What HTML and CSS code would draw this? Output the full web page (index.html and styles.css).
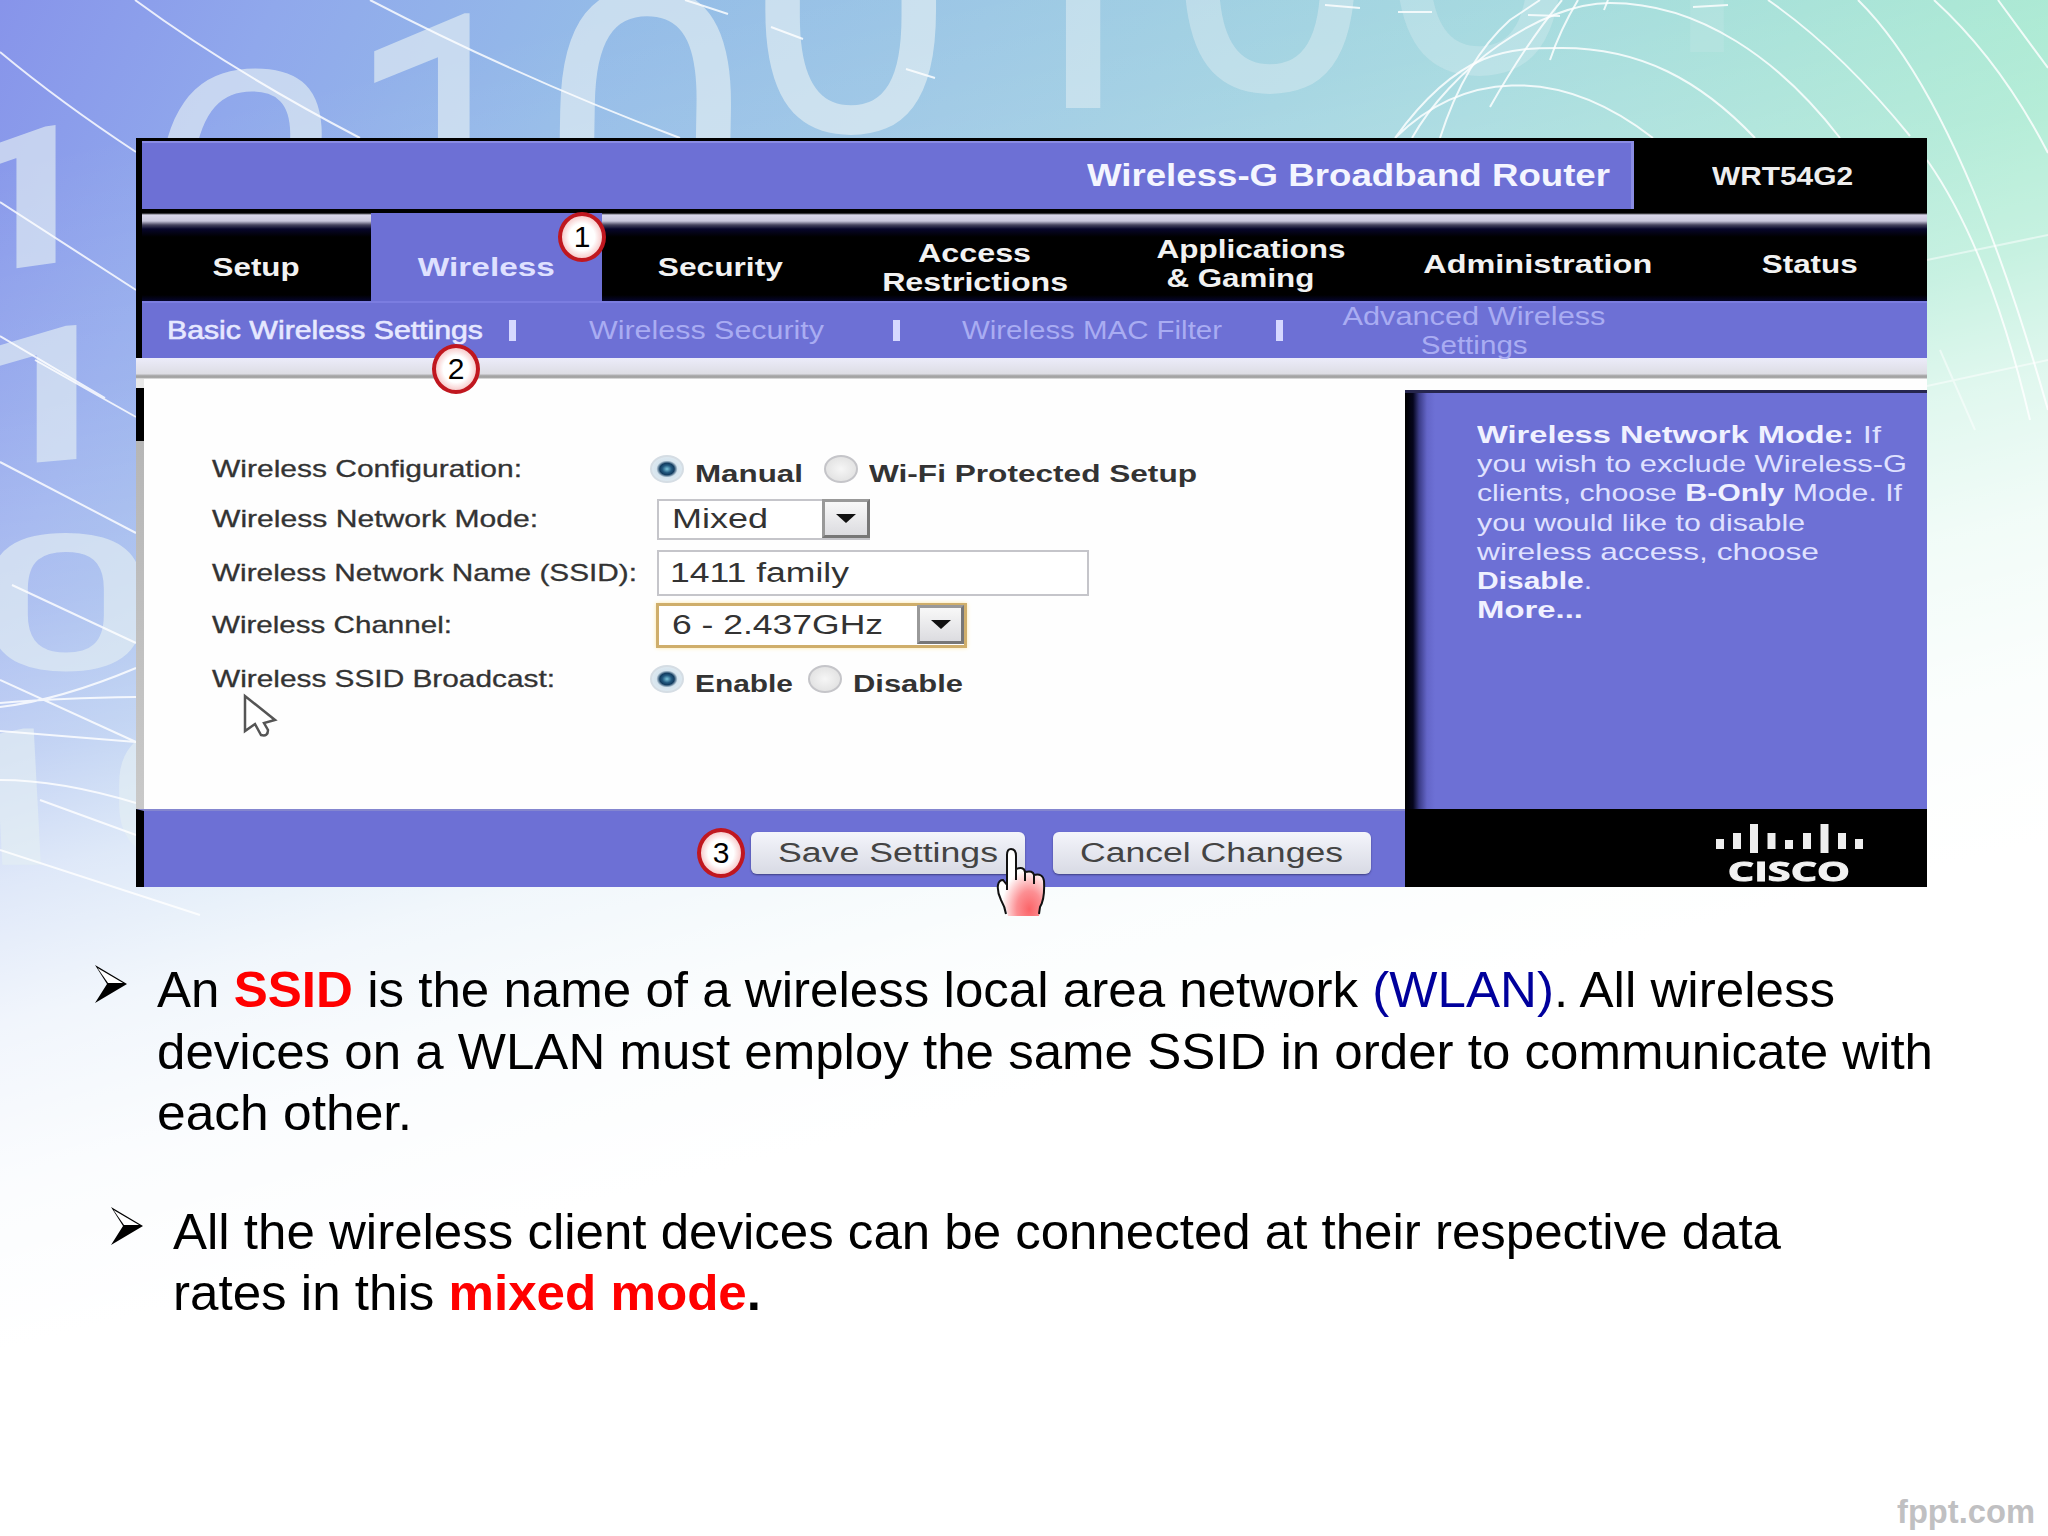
FILE: index.html
```html
<!DOCTYPE html>
<html lang="en">
<head>
  <meta charset="UTF-8">
  <title>Wireless Settings</title>
  <link rel="stylesheet" href="styles.css">
</head>
<body>
  <div class="slide">
    <svg class="backdrop" width="2048" height="1536" viewBox="0 0 2048 1536">
      <!-- binary digits -->
      <g class="digits">
        <text transform="translate(122 292) skewX(-9) scale(3.5 3.1)">0</text>
        <text transform="translate(345 292) scale(3.5 3.9)">1</text>
        <text transform="translate(536 275) skewX(-1) scale(3.8 4)">0</text>
        <text transform="translate(744 131) scale(3.8 4)">0</text>
        <text transform="translate(965 108) scale(3.8 4)" opacity=".8">1</text>
        <text transform="translate(1163 90) scale(3.8 4)" opacity=".65">0</text>
        <text transform="translate(1375 72) scale(3.7 4)" opacity=".45">0</text>
        <text transform="translate(1592 52) scale(3.7 4)" opacity=".25">1</text>
        <text class="heavy" transform="translate(-65 277) skewY(-8) scale(3.25 1.85)">1</text>
        <text class="heavy" transform="translate(-46 467) skewY(-5) scale(3.3 1.8)">1</text>
        <text class="heavy" transform="translate(-24 667) scale(3.2 1.82)">0</text>
        <text class="heavy" transform="translate(-78 862) skewX(3) scale(3.2 1.83)">1</text>
        <text class="heavy" transform="translate(106 860) scale(3.2 1.84)">0</text>
      </g>
      <!-- thin curves -->
      <g class="curves">
        <path d="M0 52Q60 102 136 152M135 0Q230 70 360 138M370 0Q520 78 680 138"/>
        <path d="M0 202L136 290M0 336L105 398M35 360L136 417M0 462L136 533M12 585L136 643"/>
        <path d="M685 0Q710 8 728 14M771 27L803 39M906 69L935 78M1325 5L1360 8M1398 12H1432M1528 15L1560 16M1693 7L1728 5"/>
        <path d="M0 707Q60 700 136 668M0 703Q60 698 136 697M0 680L136 742M0 731L136 742M0 780Q60 780 136 803M40 800L136 835M0 850L200 915"/>
        <path d="M1395 138C1460 74 1555 62 1653 138M1395 138C1460 48 1510 48 1562 48C1640 48 1700 80 1755 138"/>
        <path d="M1412 138C1450 70 1540 3 1610 3C1700 3 1780 60 1840 138M1768 0Q1840 50 1910 136"/>
        <path d="M1440 138Q1465 60 1510 20L1540 0M1490 107Q1525 45 1562 0M1550 60Q1560 30 1578 0M1604 10L1608 0"/>
        <path d="M1858 0Q1960 100 2048 410M1934 0Q2000 60 2048 153M1998 0L2048 68M1927 160Q1990 250 2030 420"/>
      </g>
      <path class="faint" d="M1927 260L2048 235M1927 386L2048 360M1940 350L1975 430"/>
    </svg>

    <div class="router">
      <div class="top">
        <div class="product"><span data-w="523">Wireless-G Broadband Router</span></div>
        <div class="model"><span data-w="141">WRT54G2</span></div>
      </div>

      <div class="tabs">
        <div class="tab setup"><span data-w="87">Setup</span></div>
        <div class="tab active"><span data-w="137">Wireless</span></div>
        <div class="tab security"><span data-w="125">Security</span></div>
        <div class="tab access"><span data-w="113">Access</span><span data-w="186">Restrictions</span></div>
        <div class="tab apps"><span data-w="189">Applications</span><span class="second" data-w="148">&amp; Gaming</span></div>
        <div class="tab admin"><span data-w="229">Administration</span></div>
        <div class="tab status"><span data-w="96">Status</span></div>
      </div>

      <div class="subnav">
        <span class="current" data-w="316">Basic Wireless Settings</span>
        <i class="bar bar1"></i>
        <div class="sub wsec"><span data-w="235">Wireless Security</span></div>
        <i class="bar bar2"></i>
        <div class="sub mac"><span data-w="260">Wireless MAC Filter</span></div>
        <i class="bar bar3"></i>
        <div class="sub adv"><span data-w="263">Advanced Wireless</span><span data-w="107">Settings</span></div>
      </div>
      <div class="strip"></div>

      <div class="main">
        <div class="form">
          <div class="row r1">
            <div class="label"><span data-w="310">Wireless Configuration:</span></div>
            <i class="radio on"></i><b class="opt" data-w="108">Manual</b>
            <i class="radio gap1"></i><b class="opt" data-w="328">Wi-Fi Protected Setup</b>
          </div>
          <div class="row r2">
            <div class="label"><span data-w="326">Wireless Network Mode:</span></div>
            <div class="select mode"><span data-w="96">Mixed</span><i class="drop"></i></div>
          </div>
          <div class="row r3">
            <div class="label"><span data-w="425">Wireless Network Name (SSID):</span></div>
            <div class="input"><span data-w="179">1411 family</span></div>
          </div>
          <div class="row r4">
            <div class="label"><span data-w="240">Wireless Channel:</span></div>
            <div class="select channel"><span data-w="211">6 - 2.437GHz</span><i class="drop"></i></div>
          </div>
          <div class="row r5">
            <div class="label"><span data-w="343">Wireless SSID Broadcast:</span></div>
            <i class="radio on"></i><b class="opt" data-w="98">Enable</b>
            <i class="radio gap2"></i><b class="opt" data-w="110">Disable</b>
          </div>
        </div>
        <div class="help">
          <div><span data-w="404"><b>Wireless Network Mode:</b> If</span></div>
          <div><span data-w="430">you wish to exclude Wireless-G</span></div>
          <div><span data-w="425">clients, choose <b>B-Only</b> Mode. If</span></div>
          <div><span data-w="328">you would like to disable</span></div>
          <div><span data-w="342">wireless access, choose</span></div>
          <div><span data-w="115"><b>Disable</b>.</span></div>
          <div><span data-w="106"><b>More...</b></span></div>
        </div>
      </div>

      <div class="bottom">
        <div class="actions">
          <div class="btn save"><span data-w="220">Save Settings</span></div>
          <div class="btn cancel"><span data-w="263">Cancel Changes</span></div>
        </div>
        <div class="brand">
          <svg width="154" height="30" viewBox="0 0 154 30">
            <path d="M8 17v10M25 11v16M42 2v29M59.500 11v16M77 18v9M95 11v16M112.500 2v29M130 11v16M147 17v10" stroke="#eee" stroke-width="8"/>
          </svg>
          <span data-w="122">CISCO</span>
        </div>
      </div>

      <div class="badge b1">1</div>
      <div class="badge b2">2</div>
      <div class="badge b3">3</div>

      <svg class="pointer" width="40" height="46" viewBox="0 0 40 46">
        <path d="M4 3V38L14 31L20 42Q27 44 27 37L23 30L34 27Z" fill="#fff" stroke="#555" stroke-width="2.500"/>
      </svg>
      <svg class="hand" width="54" height="72" viewBox="0 0 54 72">
        <defs>
          <radialGradient id="skin" cx=".68" cy=".9" r=".6">
            <stop offset="0" stop-color="#fb6468"/>
            <stop offset=".45" stop-color="#fc8f93"/>
            <stop offset="1" stop-color="#fff"/>
          </radialGradient>
        </defs>
        <path d="M12 69Q10 60 5 53Q1 45 2 38Q3 33 7 33L11 38V8Q11 2 15 2Q20 2 20 9V22Q28 19 29 25Q37 23 38 28Q47 26 48 34Q49 52 44 60L43 69Z" fill="url(#skin)"/>
        <path d="M10 67Q9 60 5 53Q1 45 2 38Q3 33 7 33L11 38V43V8Q11 2 15 2Q20 2 20 9V33V22Q28 19 29 25V34V25Q37 23 38 28V37V28Q47 26 48 34Q49 52 44 60L43 67" fill="none" stroke="#111" stroke-width="2"/>
      </svg>
    </div>

    <div class="points">
      <div class="point">
        <svg class="arrow" width="34" height="40" viewBox="0 0 34 40"><path d="M1 1L33 20L1 39L13 20Z" fill="#000"/><path d="M3.500 4L29 19H14Z" fill="#fff"/></svg>
        <div>
          <p><span data-w="1678">An <b class="red">SSID</b> is the name of a wireless local area network <span class="blue">(WLAN)</span>. All wireless</span></p>
          <p><span data-w="1776">devices on a WLAN must employ the same SSID in order to communicate with</span></p>
          <p><span data-w="255">each other.</span></p>
        </div>
      </div>
      <div class="point last">
        <svg class="arrow" width="34" height="40" viewBox="0 0 34 40"><path d="M1 1L33 20L1 39L13 20Z" fill="#000"/><path d="M3.500 4L29 19H14Z" fill="#fff"/></svg>
        <div>
          <p><span data-w="1608">All the wireless client devices can be connected at their respective data</span></p>
          <p><span data-w="588">rates in this <b class="red">mixed mode</b><b>.</b></span></p>
        </div>
      </div>
    </div>
    <div class="credit"><span data-w="138">fppt.com</span></div>
  </div>
  <script src="fit.js"></script>
</body>
</html>
```
FILE: styles.css
```css
* { box-sizing: border-box; }
body { margin: 0; font-family: "Liberation Sans", Arial, sans-serif; background: #fff; }
p { margin: 0; }
[data-w] { display: inline-block; white-space: nowrap; transform-origin: 0 50%; }

.slide {
  position: relative;
  display: flex;
  flex-direction: column;
  width: 2048px;
  height: 1536px;
  overflow: hidden;
  padding-top: 138px;
  background:
    linear-gradient(166deg, rgba(255,255,255,0) 8%, rgba(255,255,255,.12) 20%, rgba(255,255,255,.28) 30%, rgba(255,255,255,.46) 37%, rgba(255,255,255,.7) 43%, rgba(255,255,255,.87) 50%, rgba(255,255,255,.96) 58%, #fff 66%),
    linear-gradient(115deg, #8794ea 0, #90a8ec 10%, #94bbe8 22%, #99c6e4 36%, #9cd6dc 55%, #98e6c8 76%);
}
.backdrop { position: absolute; left: 0; top: 0; }
.digits { font: 100px Roboto, sans-serif; fill: #e4eff3; opacity: .66; }
.heavy { stroke: #e4eff3; stroke-width: 3; }
.curves { fill: none; stroke: #fff; stroke-opacity: .82; stroke-width: 2; }
.faint { fill: none; stroke: #fff; stroke-opacity: .5; stroke-width: 2; }

/* router page */
.router {
  position: relative;
  flex: none;
  display: flex;
  flex-direction: column;
  width: 1791px;
  height: 749px;
  margin-left: 136px;
  background: #000;
}
.top { display: flex; height: 75px; padding: 3px 0 4px 6px; }
.product {
  width: 1492px;
  padding-right: 21px;
  border-top: 2px solid #8a8ce4;
  border-right: 3px solid #8a8ce4;
  background: #6d70d5;
  color: #f4f5ff;
  font-size: 31px;
  font-weight: bold;
  line-height: 65px;
  text-align: right;
}
.model { flex: 1; padding-left: 78px; color: #eee; font-size: 26px; font-weight: bold; line-height: 70px; }

.tabs { display: flex; height: 88px; padding-left: 6px; }
.tab {
  display: flex;
  flex-direction: column;
  align-items: center;
  justify-content: center;
  padding-top: 21px;
  background: linear-gradient(#000 0, #d9d7ea 2px, #c9c7dc 8px, #45435e 12px, #07062a 16px, #000 24px, #000 82px, #05052c 88px);
  color: #f2f2f2;
  font-size: 26px;
  font-weight: bold;
  line-height: 29px;
}
.setup { width: 229px; }
.active { width: 231px; background: #6d70d5; color: #dfe1ff; }
.security { width: 236px; }
.access { width: 274px; }
.apps { width: 268px; padding: 14px 0 0 10px; }
.second { position: relative; left: -11px; }
.admin { width: 316px; padding-top: 14px; }
.status { width: 231px; padding: 14px 4px 0 0; }

.subnav {
  display: flex;
  align-items: center;
  height: 57px;
  margin-left: 6px;
  padding-left: 25px;
  background: #6d70d5;
  border-top: 2px solid #7b7de0;
  color: #a9acf2;
  font-size: 25px;
  line-height: 29px;
}
.current { color: #e6e8ff; -webkit-text-stroke: .6px #e6e8ff; }
.bar { width: 7px; height: 21px; background: #d5d8ff; }
.bar1 { margin-left: 26px; }
.bar2 { margin-left: 69px; }
.bar3 { margin-left: 54px; }
.wsec { margin-left: 73px; }
.mac { margin-left: 62px; }
.adv { display: flex; flex-direction: column; align-items: center; margin-left: 84px; }
.strip { height: 21px; background: linear-gradient(#ececfa, #dddde4 75%, #a2a2a2 85%, #a8a8a8 95%, #fff); }

.main { display: flex; height: 430px; background: #fefefe; }
.form {
  width: 1269px;
  padding: 64px 0 0 68px;
  border-left: 8px solid;
  border-image: linear-gradient(#e8e8e8 9px, #000 9px, #000 62px, #b6b6b6 62px, #c9c9c9 100%) 0 0 0 8;
  color: #333;
}
.row { display: flex; align-items: center; }
.r1 { height: 52px; }
.r2 { height: 48px; }
.r3 { height: 60px; }
.r4 { height: 44px; }
.r5 { height: 64px; }
.label { width: 438px; font-size: 24px; line-height: 30px; -webkit-text-stroke: .3px #333; }
.radio { flex: none; width: 34px; height: 28px; border-radius: 50%; border: 2px solid #c5c5c9; background: radial-gradient(#f6f6f6, #dcdcdc); }
.radio.on { border-color: #d5dde4; background: radial-gradient(#7cc6dc 0, #22587f 22%, #123c60 34%, #d5e4ee 50%, #e8eef2 100%); }
.opt { margin: 10px 0 0 11px; font-size: 23px; line-height: 26px; }
.radio.gap1 { margin-left: 21px; }
.radio.gap2 { margin-left: 15px; }
.select, .input { display: flex; align-items: center; border: 2px solid #c5c5ca; background: #fff; font-size: 27px; }
.mode { width: 213px; height: 41px; margin-left: 7px; padding-left: 13px; }
.input { width: 432px; height: 46px; margin-left: 7px; padding-left: 11px; }
.channel { width: 311px; height: 45px; margin-left: 6px; padding-left: 13px; border: 3px solid #cfae6b; box-shadow: 0 0 4px #ffe9a8; }
.drop {
  display: flex;
  align-items: center;
  justify-content: center;
  width: 48px;
  height: 39px;
  margin: -1px -2px 0 auto;
  border: 3px solid #777;
  border-top-color: #999;
  border-left-color: #999;
  background: linear-gradient(#f8f8f8, #dcdce0);
}
.channel .drop { margin-right: 0; width: 47px; }
.drop::after { content: ""; border: 10px solid transparent; border-top: 9px solid #111; border-bottom: 0; }

.help {
  flex: 1;
  margin-top: 11px;
  padding: 27px 0 0 72px;
  border-top: 3px solid #26264e;
  background: linear-gradient(90deg, #000 0, #05051c 8px, #3a3b86 14px, #6466c8 22px, #6d70d5 30px);
  color: #dfe1ff;
  font-size: 24px;
  line-height: 29.2px;
}
.help b { color: #f0f1ff; }

.bottom { display: flex; height: 78px; }
.actions {
  display: flex;
  gap: 28px;
  width: 1269px;
  padding: 21px 0 0 607px;
  border-left: 8px solid #000;
  border-top: 2px solid #8486cf;
  background: #6d70d5;
}
.btn {
  height: 42px;
  border-radius: 6px;
  background: linear-gradient(#f4f5fb, #d8dae4);
  box-shadow: 0 1px 2px #3e3f80;
  color: #444;
  font-size: 27px;
  line-height: 42px;
}
.save { width: 274px; padding-left: 27px; }
.cancel { width: 318px; padding-left: 27px; }
.brand {
  display: flex;
  flex-direction: column;
  align-items: center;
  width: 154px;
  margin-left: 307px;
  padding-top: 13px;
  color: #f2f2f2;
  font: bold 27px "Open Sans", sans-serif;
  line-height: 38px;
  -webkit-text-stroke: 1px #f2f2f2;
}
.brand svg { flex: none; overflow: visible; }

/* numbered steps and cursors over the page */
.badge {
  position: absolute;
  width: 48px;
  height: 50px;
  border: 4px solid #c0171f;
  border-radius: 50%;
  background: radial-gradient(#fff 45%, #f6c4c4 75%);
  font-size: 30px;
  line-height: 42px;
  text-align: center;
}
.b1 { left: 422px; top: 74px; }
.b2 { left: 296px; top: 206px; }
.b3 { left: 561px; top: 690px; }
.pointer { position: absolute; left: 105px; top: 555px; }
.hand { position: absolute; left: 860px; top: 709px; }

.points { position: relative; padding: 73px 0 0 92px; font-size: 50px; line-height: 61.6px; }
.point { display: flex; }
.point p { height: 61.6px; }
.arrow { margin: 4px 29px 0 2px; }
.last { margin: 57px 0 0 16px; }
.red { color: #f00; }
.blue { color: #00009c; }
.credit { margin: auto 13px 0 auto; padding-bottom: 4px; color: #c0c0c2; font-size: 33px; font-weight: bold; line-height: 40px; }
```
FILE: fit.js
```js
// stretch each line of text to its own width
document.querySelectorAll("[data-w]").forEach(el => {
  const own = el.getBoundingClientRect().width;
  const w = Number(el.dataset.w);
  el.style.transform = "scaleX(" + w / own + ")";
  const parent = getComputedStyle(el.parentNode);
  if (parent.display === "flex" && parent.flexDirection === "column") {
    el.style.transformOrigin = "50% 50%";
  } else {
    el.style.marginRight = (w - own) + "px";
  }
});
```
